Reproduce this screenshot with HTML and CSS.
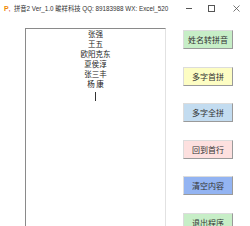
FILE: index.html
```html
<!DOCTYPE html>
<html>
<head>
<meta charset="utf-8">
<link rel="stylesheet" href="styles.css">
</head>
<body>
<div class="window">
  <div class="titlebar">
    <span class="app-icon">P<span class="dot">,</span></span>
    <span class="title">拼音2 Ver_1.0 畯祥科技 QQ: 89183988 WX: Excel_520</span>
    <div class="controls">
      <span class="ctl min"></span>
      <span class="ctl max"></span>
      <span class="ctl close">
        <svg width="7" height="7" viewBox="0 0 7 7"><path d="M0.5 0.5L6.5 6.5M6.5 0.5L0.5 6.5" stroke="#555" stroke-width="0.8" fill="none"/></svg>
      </span>
    </div>
  </div>
  <div class="content">
    <div class="textbox">
      <div class="line">张强</div>
      <div class="line">王五</div>
      <div class="line">欧阳克东</div>
      <div class="line">夏侯淳</div>
      <div class="line">张三丰</div>
      <div class="line">杨 康</div>
      <div class="line"><span class="caret"></span></div>
    </div>
    <div class="buttons">
      <div class="btn green">姓名转拼音</div>
      <div class="btn yellow">多字首拼</div>
      <div class="btn lightblue">多字全拼</div>
      <div class="btn pink">回到首行</div>
      <div class="btn blue">清空内容</div>
      <div class="btn green">退出程序</div>
    </div>
  </div>
</div>
</body>
</html>
```
FILE: styles.css
```css
html, body {
  margin: 0;
  padding: 0;
  background: #ffffff;
}
.window {
  width: 250px;
  height: 226px;
  overflow: hidden;
  background: #ffffff;
  font-family: "Noto Sans CJK SC", "Liberation Sans", sans-serif;
  color: #222;
}
.titlebar {
  height: 17px;
  display: flex;
  align-items: center;
  padding-left: 4px;
  font-family: "Liberation Sans", "Noto Sans CJK SC", sans-serif;
  font-size: 6.3px;
  color: #333;
}
.app-icon {
  color: #f08a00;
  font-family: "Liberation Sans", sans-serif;
  font-weight: bold;
  font-size: 7px;
  width: 10px;
}
.app-icon .dot {
  color: #e03030;
  font-size: 6px;
}
.title {
  white-space: nowrap;
}
.controls {
  margin-left: auto;
  display: flex;
  align-items: center;
  padding-right: 10px;
}
.ctl {
  display: block;
}
.min {
  width: 6px;
  height: 1px;
  background: #555;
  margin-right: 16px;
}
.max {
  width: 5px;
  height: 5px;
  border: 1px solid #555;
  margin-right: 18px;
}
.close {
  width: 7px;
  height: 7px;
}
.close svg {
  display: block;
}
.content {
  display: flex;
  padding-left: 25px;
  padding-top: 11px;
}
.textbox {
  width: 139px;
  height: 220px;
  border-top: 1px solid #8a8a8a;
  border-left: 1px solid #8a8a8a;
  border-right: 1px solid #e2e2e2;
  padding-top: 0px;
  font-size: 7.5px;
  line-height: 10px;
  text-align: center;
  color: #222;
}
.line {
  height: 10px;
}
.caret {
  display: inline-block;
  width: 1px;
  height: 9px;
  background: #333;
  vertical-align: middle;
  margin-top: 3px;
}
.buttons {
  margin-left: 17px;
  margin-top: 2px;
  display: flex;
  flex-direction: column;
  gap: 17.6px;
}
.btn {
  width: 48px;
  height: 17px;
  border: 1px solid #dcdcdc;
  border-right-color: #9a9a9a;
  border-bottom-color: #9a9a9a;
  font-size: 8px;
  line-height: 17px;
  text-align: center;
  color: #333;
}
.green { background: #c7eec7; }
.yellow { background: #fdfdc3; }
.lightblue { background: #c3dcf0; }
.pink { background: #fde0df; }
.blue { background: #93b4f2; }
```
